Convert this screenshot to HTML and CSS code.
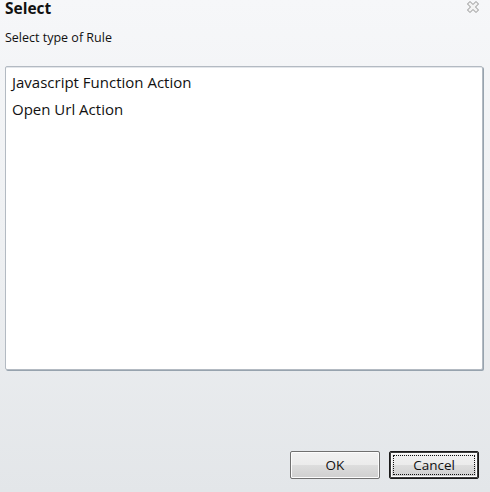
FILE: index.html
```html
<!DOCTYPE html>
<html>
<head>
<meta charset="utf-8">
<link rel="stylesheet" href="styles.css">
</head>
<body>
<div class="dialog">
  <div class="titlebar">
    <span class="title">Select</span>
    <svg class="close" width="12" height="12" viewBox="0 0 12 12">
      <path d="M0.5 3 L3 0.5 L6 3.5 L9 0.5 L11.5 3 L8.5 6 L11.5 9 L9 11.5 L6 8.5 L3 11.5 L0.5 9 L3.5 6 Z" fill="#f3f3f3" stroke="#8f8f8f" stroke-width="1" stroke-linejoin="round"/>
    </svg>
  </div>
  <div class="subtitle">Select type of Rule</div>
  <div class="listbox">
    <div class="item">Javascript Function Action</div>
    <div class="item">Open Url Action</div>
  </div>
  <div class="footer">
    <button class="btn">OK</button>
    <button class="btn default"><span class="focus">Cancel</span></button>
  </div>
</div>
</body>
</html>
```
FILE: styles.css
```css
html, body {
  margin: 0;
  padding: 0;
}
body {
  width: 490px;
  height: 492px;
  overflow: hidden;
  font-family: "Open Sans", "Noto Sans", sans-serif;
  color: #000;
}
.dialog {
  height: 492px;
  box-sizing: border-box;
  display: flex;
  flex-direction: column;
  background: linear-gradient(to bottom, #f6f7f9 0%, #eef0f2 50%, #e3e6e9 100%);
}
.titlebar {
  display: flex;
  justify-content: space-between;
  align-items: flex-start;
  padding: 0 11px 0 5px;
  height: 16px;
}
.title {
  font-weight: bold;
  font-size: 15.5px;
  line-height: 16px;
  color: #111;
}
.close {
  margin-top: 1px;
}
.subtitle {
  font-size: 12.5px;
  line-height: 16px;
  padding: 14px 5px 0;
  color: #111;
}
.listbox {
  margin: 20px 7px 0 5px;
  height: 300px;
  background: #fff;
  border: 1px solid #b3bac2;
  border-radius: 2px;
  box-shadow: 1px 1px 0 #97a3ae, inset 0 1px 0 #e3e6ea;
  padding: 2px 0 0 6px;
}
.item {
  font-size: 15px;
  line-height: 27px;
  color: #111;
}
.footer {
  margin-top: auto;
  display: flex;
  justify-content: flex-end;
  gap: 9px;
  padding: 0 11px 13px 0;
}
.btn {
  width: 90px;
  height: 28px;
  box-sizing: border-box;
  border: 1px solid #707070;
  border-radius: 2px;
  background: linear-gradient(to bottom, #f2f2f2 0%, #ebebeb 50%, #dddddd 51%, #cfcfcf 100%);
  font-family: "Open Sans", "Noto Sans", sans-serif;
  font-size: 13.5px;
  color: #111;
  padding: 0;
  box-shadow: inset 0 0 0 1px #fcfcfc;
}
.btn.default {
  border: 1px solid #1a1a1a;
  box-shadow: inset 0 0 0 1px #3c3c3c, inset 0 0 0 2px #fcfcfc;
  padding: 3px;
}
.focus {
  display: flex;
  align-items: center;
  justify-content: center;
  width: 100%;
  height: 100%;
  box-sizing: border-box;
  border: 1px dotted #111;
}
```
